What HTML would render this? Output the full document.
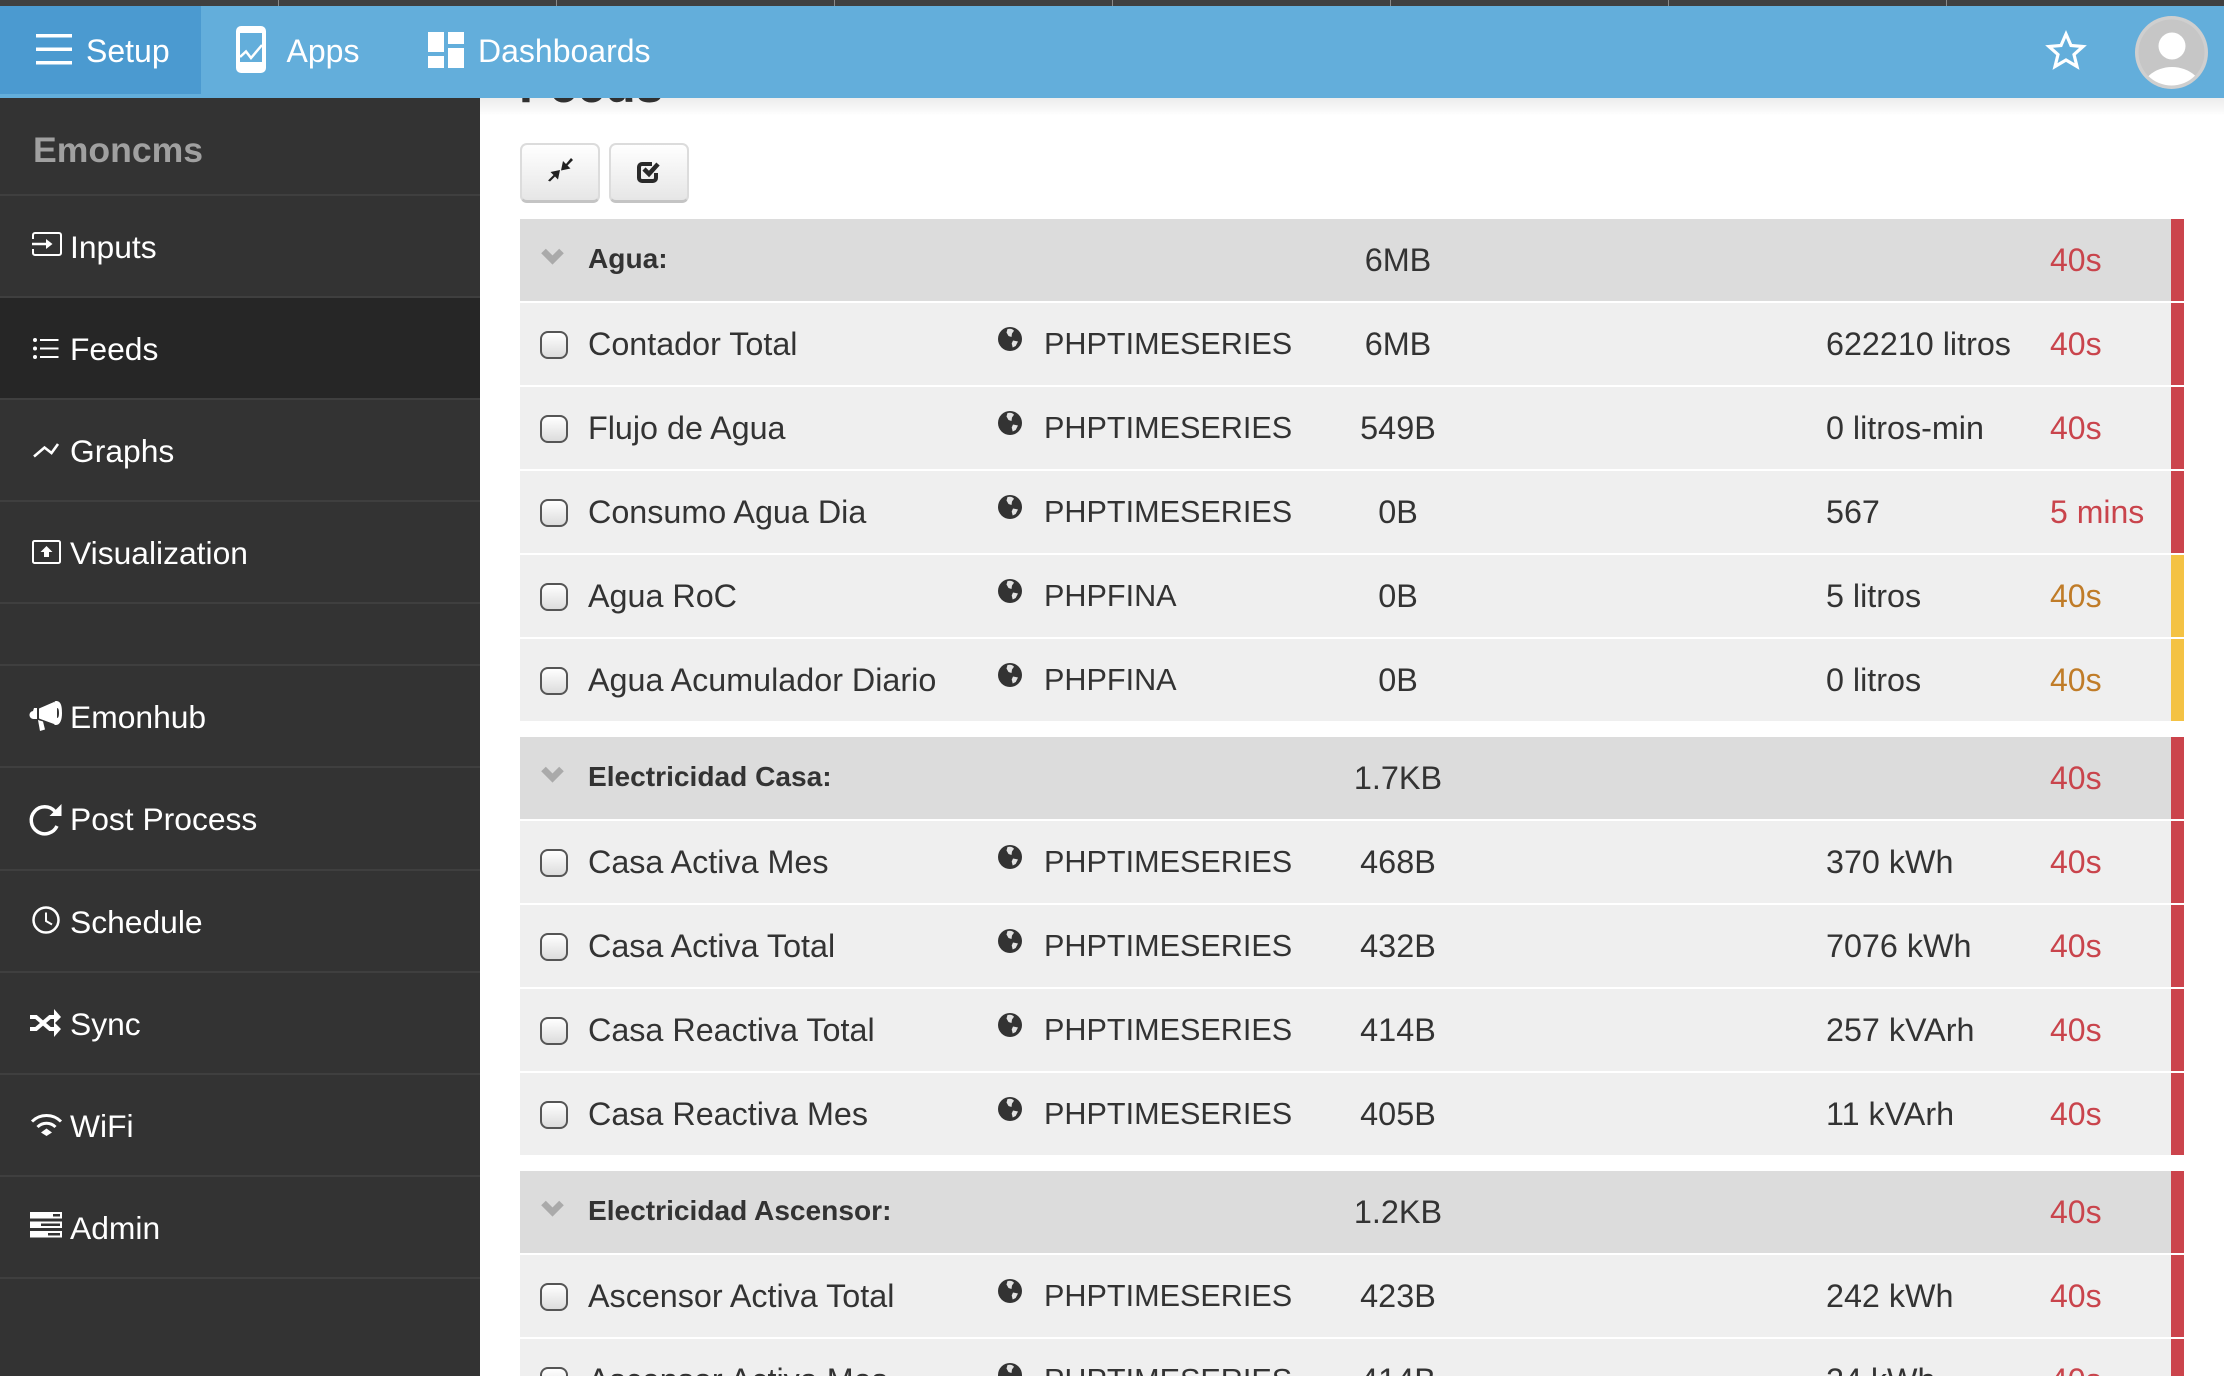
<!DOCTYPE html>
<html><head><meta charset="utf-8"><style>
html,body{margin:0;padding:0;background:#fff;width:2224px;height:1376px;overflow:hidden}
#w{position:relative;width:2224px;height:1376px;overflow:hidden;font-family:"Liberation Sans",sans-serif;color:#333}
.a{position:absolute}svg{position:absolute;overflow:visible}
#top{left:0;top:0;width:2224px;height:6px;background:#404040}
#top i{position:absolute;top:0;width:1px;height:6px;background:#8a8a8a}
#nav{left:0;top:6px;width:2224px;height:92px;background:#63aedb;z-index:5}
#act{left:0;top:0;width:201px;height:88px;background:#4b9ad0}
.n{position:absolute;top:0;line-height:90px;font-size:32px;color:#fff;white-space:nowrap}
#shadow{left:480px;top:98px;width:1744px;height:18px;background:linear-gradient(rgba(0,0,0,.075),rgba(0,0,0,0));z-index:4}
#side{left:0;top:98px;width:480px;height:1278px;background:#333;z-index:3}
.s{position:absolute;left:0;width:480px;border-bottom:2px solid #3f3f3f;box-sizing:content-box;font-size:31.8px;color:#fff;white-space:nowrap}
.s span{position:absolute;left:70px;top:0}
h2{position:absolute;margin:0;left:519px;top:35px;font-size:50px;line-height:100px;font-weight:bold;color:#333}
.btn{position:absolute;top:143px;width:80px;height:60px;box-sizing:border-box;border:2px solid #dcdcdc;border-bottom:3px solid #c4c4c4;border-radius:7px;background:linear-gradient(#fff,#e6e6e6)}
.r{position:absolute;left:520px;width:1664px;height:82px;line-height:82px;font-size:32.3px;background:#efefef;color:#333;white-space:nowrap}
.h{background:#dcdcdc}
.r span{position:absolute;top:0}
.nm{left:68px}.en{left:524px;font-size:30.6px}.sz{left:778px;width:200px;text-align:center;font-size:32.4px}.vl{left:1306px}.tm{left:1530px;font-size:32px}
.hn{left:68px;font-weight:bold;font-size:28.1px;line-height:80px}
.R .tm{color:#c9444c}.Y .tm{color:#c07c28}
.b{position:absolute;right:0;top:0;width:13px;height:82px;background:#cb444c}
.Y .b{background:#f4c244}
.c{position:absolute;left:20px;top:28px;width:28px;height:28px;box-sizing:border-box;border:2px solid #555;border-radius:8px;background:linear-gradient(#fff,#dcdcdc)}
.g{left:478px;top:24px}
.ch{left:21px;top:29px}
</style></head><body><div id="w">
<svg width="0" height="0" style="position:absolute"><defs>
<g id="gl"><circle cx="12" cy="12" r="12" fill="#333"/><path d="M9.500 2c3.500-.8 5.500.3 6.500 1.800l-2 2.700-.5 3.500-3-1-2-3.500zM15 13.500l5 1-2.300 4.500-3 1.500-1-4z" fill="#e2e2e2"/></g>
<path id="cv" d="M2.500 3L11.500 12 20.500 3" fill="none" stroke="#aaa" stroke-width="6.500"/>
</defs></svg>

<div class="a" id="top"><i style="left:278px"></i><i style="left:556px"></i><i style="left:834px"></i><i style="left:1112px"></i><i style="left:1390px"></i><i style="left:1668px"></i><i style="left:1946px"></i></div>

<div class="a" id="nav">
<div class="a" id="act"></div>
<svg style="left:36px;top:28px" width="36" height="31"><rect y="0" width="36" height="3.500" fill="#fff"/><rect y="13.500" width="36" height="3.500" fill="#fff"/><rect y="27" width="36" height="3.500" fill="#fff"/></svg>
<div class="n" style="left:86px">Setup</div>
<svg style="left:236px;top:20px" width="30" height="48"><rect x="2" y="2" width="26" height="43" rx="3" fill="none" stroke="#fff" stroke-width="4"/><rect x="2" y="2" width="26" height="5" fill="#fff"/><rect x="2" y="36" width="26" height="10" fill="#fff"/><path d="M4 31L10 25.500 15 32 26 19" fill="none" stroke="#fff" stroke-width="2.500"/></svg>
<div class="n" style="left:286.500px">Apps</div>
<svg style="left:428px;top:26px" width="36" height="36" fill="#fff"><rect width="16" height="20"/><rect y="24" width="16" height="12"/><rect x="20" width="16" height="12"/><rect x="20" y="16" width="16" height="20"/></svg>
<div class="n" style="left:478px">Dashboards</div>
<svg style="left:2046px;top:25px" width="40" height="38"><path d="M20 3L25 14.500 37 15.500 28 23.500 31 35.500 20 29 9 35.500 12 23.500 3 15.500 15 14.500Z" fill="none" stroke="#fff" stroke-width="3.200"/></svg>
<svg style="left:2135px;top:10px" width="73" height="73"><defs><clipPath id="av"><circle cx="36.500" cy="36.500" r="33"/></clipPath></defs><circle cx="36.500" cy="36.500" r="36.500" fill="#cfcfcf"/><circle cx="36.500" cy="36.500" r="33" fill="#c6c6c6"/><circle cx="37" cy="30" r="13.500" fill="#fff"/><ellipse cx="37" cy="79" rx="32" ry="28" fill="#fff" clip-path="url(#av)"/></svg>
</div>
<div class="a" id="shadow"></div>

<h2>Feeds</h2>
<div class="btn" style="left:520px"></div>
<div class="btn" style="left:609px"></div>
<svg style="left:548px;top:158px" width="25" height="25" fill="#222"><path d="M23 0l2 2-5.500 5.500 3 3-9.500 2 2-9.500 3 3zM0 22.500l5.500-5.500-3-3 9.500-2-2 9.500-3-3-5 5z"/></svg>
<svg style="left:637px;top:160px" width="24" height="24"><path d="M19 13v5a3 3 0 0 1-3 3H5a3 3 0 0 1-3-3V7a3 3 0 0 1 3-3h10" fill="none" stroke="#2a2a2a" stroke-width="4"/><path d="M7 9l5 5 9-10" fill="none" stroke="#2a2a2a" stroke-width="4.500"/></svg>

<div class="a" id="side">
<div class="s" style="top:0;height:96px"><span style="left:33px;top:0;line-height:104px;font-weight:bold;font-size:35.600px;color:#a0a0a0">Emoncms</span></div>
<div class="s" style="top:98px;height:100px;line-height:102px"><span>Inputs</span></div>
<div class="s" style="top:200px;height:100px;line-height:102px;background:#262626"><span>Feeds</span></div>
<div class="s" style="top:302px;height:100px;line-height:102px"><span>Graphs</span></div>
<div class="s" style="top:404px;height:100px;line-height:102px"><span>Visualization</span></div>
<div class="s" style="top:506px;height:60px"></div>
<div class="s" style="top:568px;height:100px;line-height:102px"><span>Emonhub</span></div>
<div class="s" style="top:670px;height:101px;line-height:102px"><span>Post Process</span></div>
<div class="s" style="top:773px;height:100px;line-height:102px"><span>Schedule</span></div>
<div class="s" style="top:875px;height:100px;line-height:102px"><span>Sync</span></div>
<div class="s" style="top:977px;height:100px;line-height:102px"><span>WiFi</span></div>
<div class="s" style="top:1079px;height:100px;line-height:102px"><span>Admin</span></div>
</div>

<div class="a" style="left:0;top:0;width:480px;height:1376px;z-index:4;pointer-events:none">
<svg style="left:31px;top:232px" width="31" height="25"><path d="M2 7V3a2 2 0 0 1 2-2h24a2 2 0 0 1 2 2v18a2 2 0 0 1-2 2H4a2 2 0 0 1-2-2v-4" fill="none" stroke="#fff" stroke-width="2"/><path d="M1 12h15" stroke="#fff" stroke-width="2.500" fill="none"/><path d="M15 7l6.500 5-6.500 5z" fill="#fff"/></svg>
<svg style="left:33px;top:338px" width="26" height="22" fill="#fff"><circle cx="2" cy="2" r="2"/><circle cx="2" cy="10.500" r="2"/><circle cx="2" cy="19" r="2"/><rect x="7" y="1" width="18.500" height="2"/><rect x="7" y="9.500" width="18.500" height="2"/><rect x="7" y="18" width="18.500" height="2"/></svg>
<svg style="left:33px;top:443px" width="26" height="15"><path d="M1 13.500L11.500 4.500 18.500 10 25 1" fill="none" stroke="#fff" stroke-width="2.600"/></svg>
<svg style="left:32px;top:540px" width="29" height="24"><rect x="1" y="1" width="27" height="22" rx="1.500" fill="none" stroke="#fff" stroke-width="2"/><path d="M14.500 6l6 6h-3.500v5h-5v-5H8.500z" fill="#fff"/></svg>
<svg style="left:30px;top:701px" width="33" height="30" fill="#fff"><path d="M4 7h3v11H4a4 4 0 0 1-1-8z"/><path d="M9 7.500L24 1v22L9 17.500z"/><path d="M8 19l5 1.500 2 8-5 1.500z"/><path d="M26 0c5 0 6 5 6 12s-2 12-6 12c-2 0-2-1-2-2V2c0-1 1-2 2-2zm1 7v10c1.500 0 2-2 2-5s-.5-5-2-5z" fill-rule="evenodd"/></svg>
<svg style="left:30px;top:802px" width="33" height="33"><path d="M25 9.500A13.500 13.500 0 1 0 27 24" fill="none" stroke="#fff" stroke-width="3.500"/><path d="M31.500 2v12h-12z" fill="#fff"/></svg>
<svg style="left:32px;top:906px" width="28" height="28"><circle cx="14" cy="14" r="12.500" fill="none" stroke="#fff" stroke-width="2.500"/><path d="M14 6.500V15l6 3.500" fill="none" stroke="#fff" stroke-width="2"/></svg>
<svg style="left:30px;top:1009px" width="32" height="28" fill="none"><path d="M0 8h6l14 12h5M0 20h6l14-12h5" stroke="#fff" stroke-width="4"/><path d="M24 0l7 8-7 7zM24 13l7 7-7 8z" fill="#fff"/></svg>
<svg style="left:31px;top:1113px" width="31" height="23" fill="none" stroke="#fff"><path d="M1 8.500C9 .5 22 .5 30 8.500" stroke-width="3"/><path d="M6.500 14c5-5 13-5 18 0" stroke-width="3"/><path d="M15.500 15.500l5.500 4-5.500 3.500-5.500-3.500z" fill="#fff" stroke="none"/></svg>
<svg style="left:30px;top:1212px" width="32" height="26"><rect width="32" height="6.500" fill="#fff"/><rect y="9.500" width="32" height="6.500" fill="#fff"/><rect y="19" width="32" height="6.500" fill="#fff"/><rect x="23" y="2" width="7" height="2.500" fill="#333"/><rect x="11" y="11.500" width="19" height="2.500" fill="#333"/><rect x="18" y="21" width="12" height="2.500" fill="#333"/></svg>
</div>

<div class="r h R" style="top:219px"><svg class="ch" width="23" height="16"><use href="#cv"/></svg><span class="hn">Agua:</span><span class="sz">6MB</span><span class="tm">40s</span><div class="b"></div></div>
<div class="r R" style="top:303px"><div class="c"></div><span class="nm">Contador Total</span><svg class="g" width="24" height="24"><use href="#gl"/></svg><span class="en">PHPTIMESERIES</span><span class="sz">6MB</span><span class="vl">622210 litros</span><span class="tm">40s</span><div class="b"></div></div>
<div class="r R" style="top:387px"><div class="c"></div><span class="nm">Flujo de Agua</span><svg class="g" width="24" height="24"><use href="#gl"/></svg><span class="en">PHPTIMESERIES</span><span class="sz">549B</span><span class="vl">0 litros-min</span><span class="tm">40s</span><div class="b"></div></div>
<div class="r R" style="top:471px"><div class="c"></div><span class="nm">Consumo Agua Dia</span><svg class="g" width="24" height="24"><use href="#gl"/></svg><span class="en">PHPTIMESERIES</span><span class="sz">0B</span><span class="vl">567</span><span class="tm">5 mins</span><div class="b"></div></div>
<div class="r Y" style="top:555px"><div class="c"></div><span class="nm">Agua RoC</span><svg class="g" width="24" height="24"><use href="#gl"/></svg><span class="en">PHPFINA</span><span class="sz">0B</span><span class="vl">5 litros</span><span class="tm">40s</span><div class="b"></div></div>
<div class="r Y" style="top:639px"><div class="c"></div><span class="nm">Agua Acumulador Diario</span><svg class="g" width="24" height="24"><use href="#gl"/></svg><span class="en">PHPFINA</span><span class="sz">0B</span><span class="vl">0 litros</span><span class="tm">40s</span><div class="b"></div></div>

<div class="r h R" style="top:737px"><svg class="ch" width="23" height="16"><use href="#cv"/></svg><span class="hn">Electricidad Casa:</span><span class="sz">1.7KB</span><span class="tm">40s</span><div class="b"></div></div>
<div class="r R" style="top:821px"><div class="c"></div><span class="nm">Casa Activa Mes</span><svg class="g" width="24" height="24"><use href="#gl"/></svg><span class="en">PHPTIMESERIES</span><span class="sz">468B</span><span class="vl">370 kWh</span><span class="tm">40s</span><div class="b"></div></div>
<div class="r R" style="top:905px"><div class="c"></div><span class="nm">Casa Activa Total</span><svg class="g" width="24" height="24"><use href="#gl"/></svg><span class="en">PHPTIMESERIES</span><span class="sz">432B</span><span class="vl">7076 kWh</span><span class="tm">40s</span><div class="b"></div></div>
<div class="r R" style="top:989px"><div class="c"></div><span class="nm">Casa Reactiva Total</span><svg class="g" width="24" height="24"><use href="#gl"/></svg><span class="en">PHPTIMESERIES</span><span class="sz">414B</span><span class="vl">257 kVArh</span><span class="tm">40s</span><div class="b"></div></div>
<div class="r R" style="top:1073px"><div class="c"></div><span class="nm">Casa Reactiva Mes</span><svg class="g" width="24" height="24"><use href="#gl"/></svg><span class="en">PHPTIMESERIES</span><span class="sz">405B</span><span class="vl">11 kVArh</span><span class="tm">40s</span><div class="b"></div></div>

<div class="r h R" style="top:1171px"><svg class="ch" width="23" height="16"><use href="#cv"/></svg><span class="hn">Electricidad Ascensor:</span><span class="sz">1.2KB</span><span class="tm">40s</span><div class="b"></div></div>
<div class="r R" style="top:1255px"><div class="c"></div><span class="nm">Ascensor Activa Total</span><svg class="g" width="24" height="24"><use href="#gl"/></svg><span class="en">PHPTIMESERIES</span><span class="sz">423B</span><span class="vl">242 kWh</span><span class="tm">40s</span><div class="b"></div></div>
<div class="r R" style="top:1339px"><div class="c"></div><span class="nm">Ascensor Activa Mes</span><svg class="g" width="24" height="24"><use href="#gl"/></svg><span class="en">PHPTIMESERIES</span><span class="sz">414B</span><span class="vl">24 kWh</span><span class="tm">40s</span><div class="b"></div></div>
</div></body></html>
